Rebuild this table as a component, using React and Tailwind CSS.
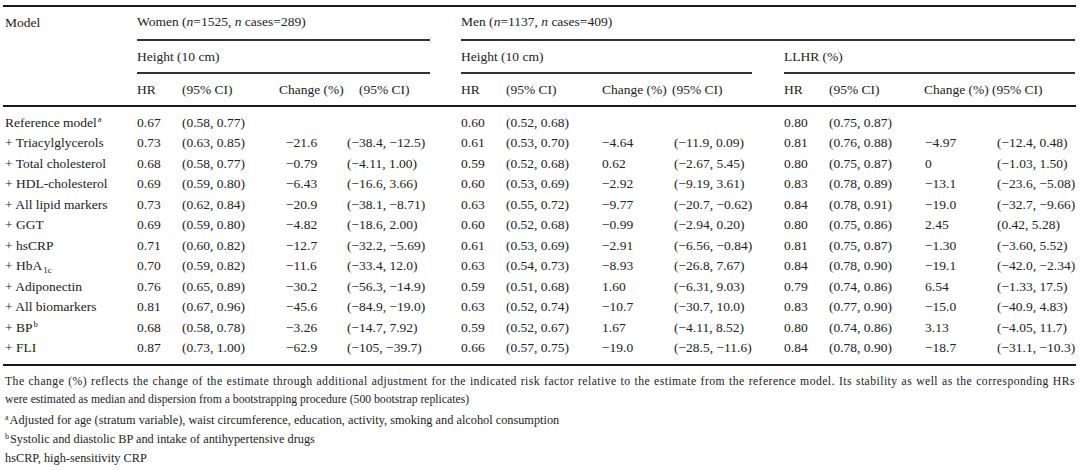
import React from "react";

const M = "\u2212";
const Sup = ({ children }) => <sup className="text-[8.5px] relative -top-[5px] ml-[1px]">{children}</sup>;
const rows = [
  { label: <>Reference model<Sup>a</Sup></>, w: ["0.67", "(0.58, 0.77)", "", ""], m: ["0.60", "(0.52, 0.68)", "", ""], l: ["0.80", "(0.75, 0.87)", "", ""] },
  { label: "+ Triacylglycerols", w: ["0.73", "(0.63, 0.85)", `${M}21.6`, `(${M}38.4, ${M}12.5)`], m: ["0.61", "(0.53, 0.70)", `${M}4.64`, `(${M}11.9, 0.09)`], l: ["0.81", "(0.76, 0.88)", `${M}4.97`, `(${M}12.4, 0.48)`] },
  { label: "+ Total cholesterol", w: ["0.68", "(0.58, 0.77)", `${M}0.79`, `(${M}4.11, 1.00)`], m: ["0.59", "(0.52, 0.68)", "0.62", `(${M}2.67, 5.45)`], l: ["0.80", "(0.75, 0.87)", "0", `(${M}1.03, 1.50)`] },
  { label: "+ HDL-cholesterol", w: ["0.69", "(0.59, 0.80)", `${M}6.43`, `(${M}16.6, 3.66)`], m: ["0.60", "(0.53, 0.69)", `${M}2.92`, `(${M}9.19, 3.61)`], l: ["0.83", "(0.78, 0.89)", `${M}13.1`, `(${M}23.6, ${M}5.08)`] },
  { label: "+ All lipid markers", w: ["0.73", "(0.62, 0.84)", `${M}20.9`, `(${M}38.1, ${M}8.71)`], m: ["0.63", "(0.55, 0.72)", `${M}9.77`, `(${M}20.7, ${M}0.62)`], l: ["0.84", "(0.78, 0.91)", `${M}19.0`, `(${M}32.7, ${M}9.66)`] },
  { label: "+ GGT", w: ["0.69", "(0.59, 0.80)", `${M}4.82`, `(${M}18.6, 2.00)`], m: ["0.60", "(0.52, 0.68)", `${M}0.99`, `(${M}2.94, 0.20)`], l: ["0.80", "(0.75, 0.86)", "2.45", "(0.42, 5.28)"] },
  { label: "+ hsCRP", w: ["0.71", "(0.60, 0.82)", `${M}12.7`, `(${M}32.2, ${M}5.69)`], m: ["0.61", "(0.53, 0.69)", `${M}2.91`, `(${M}6.56, ${M}0.84)`], l: ["0.81", "(0.75, 0.87)", `${M}1.30`, `(${M}3.60, 5.52)`] },
  { label: <>+ HbA<sub className="text-[9px] relative top-[3px] ml-[1px]">1c</sub></>, w: ["0.70", "(0.59, 0.82)", `${M}11.6`, `(${M}33.4, 12.0)`], m: ["0.63", "(0.54, 0.73)", `${M}8.93`, `(${M}26.8, 7.67)`], l: ["0.84", "(0.78, 0.90)", `${M}19.1`, `(${M}42.0, ${M}2.34)`] },
  { label: "+ Adiponectin", w: ["0.76", "(0.65, 0.89)", `${M}30.2`, `(${M}56.3, ${M}14.9)`], m: ["0.59", "(0.51, 0.68)", "1.60", `(${M}6.31, 9.03)`], l: ["0.79", "(0.74, 0.86)", "6.54", `(${M}1.33, 17.5)`] },
  { label: "+ All biomarkers", w: ["0.81", "(0.67, 0.96)", `${M}45.6`, `(${M}84.9, ${M}19.0)`], m: ["0.63", "(0.52, 0.74)", `${M}10.7`, `(${M}30.7, 10.0)`], l: ["0.83", "(0.77, 0.90)", `${M}15.0`, `(${M}40.9, 4.83)`] },
  { label: <>+ BP<Sup>b</Sup></>, w: ["0.68", "(0.58, 0.78)", `${M}3.26`, `(${M}14.7, 7.92)`], m: ["0.59", "(0.52, 0.67)", "1.67", `(${M}4.11, 8.52)`], l: ["0.80", "(0.74, 0.86)", "3.13", `(${M}4.05, 11.7)`] },
  { label: "+ FLI", w: ["0.87", "(0.73, 1.00)", `${M}62.9`, `(${M}105, ${M}39.7)`], m: ["0.66", "(0.57, 0.75)", `${M}19.0`, `(${M}28.5, ${M}11.6)`], l: ["0.84", "(0.78, 0.90)", `${M}18.7`, `(${M}31.1, ${M}10.3)`] },
];

const GRID = "grid grid-cols-[132px_45px_97px_68px_114px_45px_96px_65px_117px_45px_95px_63px_88px]";

function Row({ r }) {
  return (
    <div className={`${GRID} h-[20.5px] items-center whitespace-nowrap`}>
      <div>{r.label}</div>
      <div>{r.w[0]}</div>
      <div>{r.w[1]}</div>
      <div className="pl-[7px]">{r.w[2]}</div>
      <div>{r.w[3]}</div>
      <div>{r.m[0]}</div>
      <div>{r.m[1]}</div>
      <div>{r.m[2]}</div>
      <div className="pl-[7px]">{r.m[3]}</div>
      <div>{r.l[0]}</div>
      <div>{r.l[1]}</div>
      <div className="pl-[1px]">{r.l[2]}</div>
      <div className="pl-[10px]">{r.l[3]}</div>
    </div>
  );
}

export default function App() {
  return (
    <div className="w-[1080px] h-[470px] overflow-hidden bg-white text-[#222] [font-family:'Liberation_Serif','Times_New_Roman',serif] text-[13.5px] leading-none">
      <div className="h-[5px]" />
      <div className="ml-[3px] w-[1073px] h-[2px] bg-[#1a1a1a]" />
      <div className="ml-[5px] w-[1070px]">
        {/* header row 1 */}
        <div className={`${GRID} h-[34px] whitespace-nowrap`}>
          <div className="flex items-center h-[32px]">Model</div>
          <div className="col-span-4 mr-[31px] h-[34px] border-b-2 border-[#333] flex items-center pb-[2px]">
            <span>Women (<i>n</i>=1525, <i>n</i> cases=289)</span>
          </div>
          <div className="col-span-8 h-[34px] border-b-2 border-[#333] flex items-center pb-[2px]">
            <span>Men (<i>n</i>=1137, <i>n</i> cases=409)</span>
          </div>
        </div>
        {/* header row 2 */}
        <div className={`${GRID} h-[33px] whitespace-nowrap`}>
          <div />
          <div className="col-span-4 mr-[31px] border-b-2 border-[#333] flex items-center">Height (10 cm)</div>
          <div className="col-span-4 mr-[32px] border-b-2 border-[#333] flex items-center">Height (10 cm)</div>
          <div className="col-span-4 border-b-2 border-[#333] flex items-center">LLHR (%)</div>
        </div>
        {/* header row 3 */}
        <div className={`${GRID} h-[31px] items-center whitespace-nowrap`}>
          <div />
          <div>HR</div>
          <div>(95% CI)</div>
          <div>Change (%)</div>
          <div className="pl-[12px]">(95% CI)</div>
          <div>HR</div>
          <div>(95% CI)</div>
          <div>Change (%)</div>
          <div className="pl-[5px]">(95% CI)</div>
          <div>HR</div>
          <div>(95% CI)</div>
          <div>Change (%)</div>
          <div className="pl-[5px]">(95% CI)</div>
        </div>
      </div>
      <div className="ml-[3px] w-[1073px] h-[2px] bg-[#1a1a1a]" />
      <div className="ml-[5px] w-[1070px] pt-[5px] pb-[6px]">
        {rows.map((r, i) => (
          <Row key={i} r={r} />
        ))}
      </div>
      <div className="ml-[3px] w-[1073px] h-[2px] bg-[#1a1a1a]" />
      <div className="ml-[5px] w-[1070px] mt-[7px] text-[12.3px] leading-[18px]">
        <div className="text-[11.7px]">
          <div className="text-justify [text-align-last:justify] tracking-[0.45px]">
            The change (%) reflects the change of the estimate through additional adjustment for the indicated risk factor relative to the estimate from the reference model. Its stability as well as the corresponding HRs
          </div>
          <div>were estimated as median and dispersion from a bootstrapping procedure (500 bootstrap replicates)</div>
        </div>
        <div className="mt-[2px] leading-[19px]">
          <sup className="text-[8px] relative -top-[4px] mr-[1px]">a</sup>Adjusted for age (stratum variable), waist circumference, education, activity, smoking and alcohol consumption
        </div>
        <div className="leading-[19px]">
          <sup className="text-[8px] relative -top-[4px] mr-[1px]">b</sup>Systolic and diastolic BP and intake of antihypertensive drugs
        </div>
        <div className="leading-[19px]">hsCRP, high-sensitivity CRP</div>
      </div>
    </div>
  );
}
